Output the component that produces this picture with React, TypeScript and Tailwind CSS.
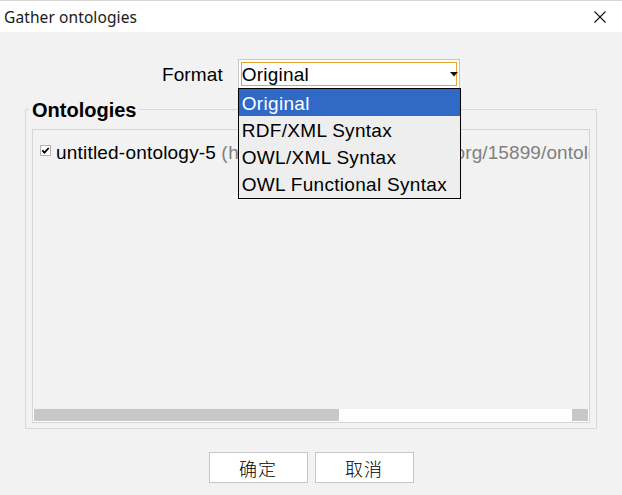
import { useState } from "react";

const formats = ["Original", "RDF/XML Syntax", "OWL/XML Syntax", "OWL Functional Syntax"];

/**
 * Gather ontologies dialog (Swing look)
 */
export default function App() {
  const [format] = useState("Original");

  return (
    <div
      className="flex flex-col w-[622px] h-[495px] bg-[#f2f2f2] overflow-hidden text-black"
      style={{ fontFamily: '"Liberation Sans", Arial, sans-serif' }}
    >
      {/* 타이틀 바 */}
      <div className="h-px bg-[#d8d8d8] shrink-0" />
      <div className="flex items-center justify-between h-[31px] bg-white pl-[4px] pr-[16px] shrink-0">
        <span className="text-[15.5px] leading-[20px] text-[#1a1a1a] font-['Noto_Sans',sans-serif] tracking-[0.1px]">
          Gather ontologies
        </span>
        <svg width="12" height="12" viewBox="0 0 12 12" className="mt-px">
          <path d="M0.5 0.5 L11.5 11.5 M11.5 0.5 L0.5 11.5" stroke="#111" strokeWidth="1.1" />
        </svg>
      </div>

      {/* Format 선택 */}
      <div className="flex items-center pl-[162px] gap-[15px] mt-[27px] relative z-10">
        <span className="text-[19px] leading-[22px] pt-px tracking-[0.1px]">Format</span>
        <div className="relative w-[222px] h-[30px] border border-[#c8c8c8] bg-white p-[2px]">
          <div className="h-full border border-[#eaa52e] text-[19px] leading-[23px] tracking-[0.2px] whitespace-nowrap">
            {format}
          </div>
          <svg width="8" height="5" viewBox="0 0 8 5" className="absolute left-[211px] top-[12px]">
            <path d="M0 0 H8 L4 4.5 Z" fill="#111" />
          </svg>
          {/* 드롭다운 목록 */}
          <div className="absolute left-[-1px] top-[28px] w-[223px] border border-black bg-[#eeeeee] pb-px">
            {formats.map((f) => (
              <div
                key={f}
                className={
                  f === format
                    ? "h-[27px] pl-[3px] pt-[3px] text-[19px] leading-[23px] tracking-[0.3px] bg-[#3169c6] text-white whitespace-nowrap"
                    : "h-[27px] pl-[3px] pt-[3px] text-[19px] leading-[23px] tracking-[0.3px] text-black whitespace-nowrap"
                }
              >
                {f}
              </div>
            ))}
          </div>
        </div>
      </div>

      {/* Ontologies 그룹 */}
      <div className="relative flex flex-col ml-[25px] mt-[20px] w-[572px] h-[320px] border border-[#d9d9d9]">
        <span className="absolute left-[3px] -top-[11px] px-[3px] bg-[#f2f2f2] text-[20px] leading-[22px] font-bold">
          Ontologies
        </span>
        <div className="flex flex-col flex-1 mx-[6px] mt-[19px] mb-[5px] border border-[#d6d6d6] overflow-hidden">
          <div className="flex-1 overflow-hidden pl-[7px] pt-[12px]">
            <div className="flex items-start whitespace-nowrap text-[19px] leading-[22px]">
              <svg width="11" height="11" viewBox="0 0 11 11" className="mt-[3px] shrink-0">
                <rect x="0.5" y="0.5" width="10" height="10" fill="#fff" stroke="#b4b4b4" />
                <path d="M2.3 5.3 L4.5 7.6 L8.7 3" stroke="#000" strokeWidth="1.8" fill="none" />
              </svg>
              <span className="ml-[5px] tracking-[0.2px]">untitled-ontology-5</span>
              <span className="ml-[5px] text-[#808080]">
                <span className="tracking-[0.75px]">(http://www.semanticweb.</span>
                <span className="tracking-[0.1px]">org/15899/ontologies/2023/0/untitled-ontology-5)</span>
              </span>
            </div>
          </div>
          {/* 가로 스크롤바 */}
          <div className="flex h-[13px] bg-white px-px pb-px shrink-0">
            <div className="w-[305px] bg-[#c8c8c8]" />
            <div className="flex-1 bg-white" />
            <div className="w-[16px] bg-[#c8c8c8]" />
          </div>
        </div>
      </div>

      {/* 버튼 */}
      <div className="flex justify-center gap-[7px] mt-[23px]">
        {["确定", "取消"].map((label) => (
          <button
            key={label}
            className="w-[99px] h-[31px] bg-white border border-[#c6c6c6] text-[18px] leading-[20px] tracking-[1px] font-light"
            style={{ fontFamily: '"Noto Sans CJK SC", sans-serif' }}
          >
            {label}
          </button>
        ))}
      </div>
    </div>
  );
}
